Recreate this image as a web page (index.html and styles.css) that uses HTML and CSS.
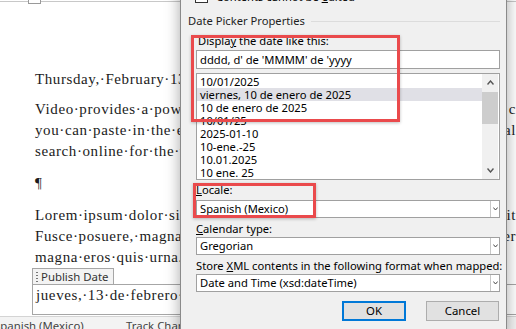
FILE: index.html
```html
<!DOCTYPE html>
<html lang="en">
<head>
    <meta charset="UTF-8">
    <title>Date Picker Properties</title>
    <link rel="stylesheet" href="styles.css">
</head>
<body>
    <div class="screen">
        <div class="doc">
            <div class="doc-top"><span class="doc-top-box"></span></div>
            <div class="page">
                <p class="para date-para"><span class="ln"><span>Thursday,·February·13,·2025</span></span></p>
                <p class="para">
                    <span class="ln"><span>Video·provides·a·powerful·way·to·help·you</span><span>·c</span></span>
                    <span class="ln"><span>you·can·paste·in·the·embed·code·for·the</span><span>al</span></span>
                    <span class="ln"><span>search·online·for·the·video·that·best</span></span>
                </p>
                <p class="para"><span class="ln"><span>¶</span></span></p>
                <p class="para">
                    <span class="ln"><span>Lorem·ipsum·dolor·sit·amet,·consectetuer</span><span>it</span></span>
                    <span class="ln"><span>Fusce·posuere,·magna·sed·pulvinar·ultricies</span><span>er</span></span>
                    <span class="ln"><span>magna·eros·quis·urna.·Nunc·viverra·imperdiet</span></span>
                </p>
                <div class="cc">
                    <div class="cc-tab"><span class="grip"></span>Publish Date</div>
                    <span class="ln"><span>jueves,·13·de·febrero·de·2025</span></span>
                </div>
            </div>
        </div>
        <div class="statusbar">
            <span class="status-lang">Spanish (Mexico)</span>
            <span class="status-track">Track Changes: Off</span>
        </div>

        <div class="dialog">
            <div class="check-row">
                <span class="checkbox"></span>
                <span>Contents cannot be <u>e</u>dited</span>
            </div>
            <div class="group-head">
                <span>Date Picker Properties</span>
                <span class="group-line"></span>
            </div>

            <div class="label label-display">Displa<u>y</u> the date like this:</div>
            <div class="textbox">dddd, d' de 'MMMM' de 'yyyy</div>
            <div class="listbox">
                <div class="list-items">
                    <div class="item">10/01/2025</div>
                    <div class="item selected">viernes, 10 de enero de 2025</div>
                    <div class="item">10 de enero de 2025</div>
                    <div class="item">10/01/25</div>
                    <div class="item">2025-01-10</div>
                    <div class="item">10-ene.-25</div>
                    <div class="item">10.01.2025</div>
                    <div class="item">10 ene. 25</div>
                </div>
                <div class="scrollbar">
                    <div class="sb-arrow">
                        <svg width="7" height="5" viewBox="0 0 7 5"><polyline points="0.5,4.5 3.5,1 6.5,4.5" fill="none" stroke="#555" stroke-width="1.4"/></svg>
                    </div>
                    <div class="sb-thumb"></div>
                    <div class="sb-arrow sb-down">
                        <svg width="7" height="5" viewBox="0 0 7 5"><polyline points="0.5,0.5 3.5,4 6.5,0.5" fill="none" stroke="#555" stroke-width="1.4"/></svg>
                    </div>
                </div>
            </div>

            <div class="label label-locale"><u>L</u>ocale:</div>
            <div class="combo">
                <span class="combo-text">Spanish (Mexico)</span>
                <span class="combo-btn"><svg width="5" height="4" viewBox="0 0 5 4"><polyline points="0.3,0.5 2.5,3 4.7,0.5" fill="none" stroke="#444" stroke-width="1"/></svg></span>
            </div>

            <div class="label label-cal"><u>C</u>alendar type:</div>
            <div class="combo combo-cal">
                <span class="combo-text">Gregorian</span>
                <span class="combo-btn"><svg width="5" height="4" viewBox="0 0 5 4"><polyline points="0.3,0.5 2.5,3 4.7,0.5" fill="none" stroke="#444" stroke-width="1"/></svg></span>
            </div>

            <div class="label label-xml">Store <u>X</u>ML contents in the following format when mapped:</div>
            <div class="combo combo-xml">
                <span class="combo-text">Date and Time (xsd:dateTime)</span>
                <span class="combo-btn"><svg width="5" height="4" viewBox="0 0 5 4"><polyline points="0.3,0.5 2.5,3 4.7,0.5" fill="none" stroke="#444" stroke-width="1"/></svg></span>
            </div>

            <div class="buttons">
                <button class="btn btn-ok">OK</button>
                <button class="btn btn-cancel">Cancel</button>
            </div>

            <div class="mark mark-format"></div>
            <div class="mark mark-locale"></div>
        </div>
    </div>
</body>
</html>
```

FILE: styles.css
```css
body {
    margin: 0;
    background-color: #fff;
}
.screen {
    position: relative;
    width: 516px;
    height: 329px;
    overflow: hidden;
    display: flex;
    flex-direction: column;
}
.doc {
    flex: 1;
    background-color: #fff;
    overflow: hidden;
}
.doc-top {
    height: 1px;
    border-bottom: 1px solid #c8c8c8;
    position: relative;
}
.doc-top-box {
    position: absolute;
    left: 28px;
    top: -8px;
    width: 11px;
    height: 10px;
    border: 1px solid #9a9a9a;
    background-color: #fff;
}
.page {
    padding-left: 35px;
    padding-top: 67px;
    font-family: "Liberation Serif", serif;
    font-size: 15px;
    letter-spacing: 0.6px;
    line-height: 21px;
    color: #1b1b1b;
}
.para {
    margin: 0 0 11px 0;
}
.date-para {
    margin-bottom: 9px;
}
.ln {
    display: flex;
    justify-content: space-between;
    white-space: nowrap;
}
.cc {
    position: relative;
    margin-top: 16px;
    margin-left: -3px;
    padding: 0 0 8px 3px;
    border: 1px solid #a6a6a6;
    border-right: none;
}
.cc-tab {
    position: absolute;
    left: -1px;
    top: -17px;
    height: 15px;
    padding: 0 4px 0 3px;
    border: 1px solid #a6a6a6;
    border-bottom: none;
    background-color: #f3f3f3;
    font-family: "Noto Sans", sans-serif;
    font-size: 11.4px;
    letter-spacing: 0;
    line-height: 15px;
    color: #333;
    display: flex;
    align-items: center;
    gap: 3px;
}
.grip {
    width: 2px;
    height: 11px;
    background-image: radial-gradient(circle, #777 0.8px, transparent 1px);
    background-size: 2px 3px;
}
.statusbar {
    height: 11px;
    border-top: 1px solid #d4d4d4;
    background-color: #f3f3f3;
    font-family: "Noto Sans", sans-serif;
    font-size: 11.4px;
    line-height: 16px;
    color: #444;
    white-space: nowrap;
    overflow: hidden;
    padding-top: 1px;
    display: flex;
}
.status-lang {
    margin-left: -6px;
    width: 132px;
}

/* dialog */
.dialog {
    position: absolute;
    left: 180px;
    top: -21px;
    width: 327px;
    height: 360px;
    box-sizing: border-box;
    padding: 0 6px 0 15px;
    background-color: #f0f0f0;
    border: 1px solid #8a8a8a;
    box-shadow: 0 0 14px rgba(0, 0, 0, 0.35);
    font-family: "Noto Sans", sans-serif;
    font-size: 11.2px;
    color: #000;
}
.check-row {
    display: flex;
    align-items: flex-end;
    gap: 8px;
    margin-top: 10px;
    margin-left: -1px;
    height: 13px;
    line-height: 12px;
}
.checkbox {
    width: 11px;
    height: 11px;
    border: 1px solid #333;
    background-color: #fff;
    flex: none;
}
.group-head {
    display: flex;
    align-items: center;
    margin: 12px 0 0 -8px;
    height: 12px;
    line-height: 12px;
    gap: 6px;
    color: #1e1e1e;
}
.group-line {
    flex: 1;
    height: 1px;
    background-color: #dcdcdc;
}
.label {
    height: 12px;
    line-height: 12px;
    white-space: nowrap;
}
.label-display {
    margin-top: 8px;
    margin-left: 2px;
}
.textbox {
    margin-top: 3px;
    height: 19px;
    box-sizing: border-box;
    border: 1px solid #a0a0a0;
    background-color: #fff;
    padding-left: 3px;
    line-height: 17px;
}
.listbox {
    margin-top: 4px;
    height: 107px;
    box-sizing: border-box;
    border: 1px solid #a0a0a0;
    background-color: #fff;
    display: flex;
}
.list-items {
    flex: 1;
    padding-top: 1px;
}
.item {
    height: 13px;
    line-height: 13px;
    padding-left: 3px;
    white-space: nowrap;
}
.item.selected {
    background-color: #e0e0e6;
}
.scrollbar {
    width: 16px;
    margin: 0 1px 0 0;
    background-color: #f0f0f0;
    display: flex;
    flex-direction: column;
}
.sb-arrow {
    height: 17px;
    display: flex;
    align-items: center;
    justify-content: center;
}
.sb-thumb {
    margin-top: 1px;
    height: 32px;
    background-color: #cdcdcd;
}
.sb-down {
    margin-top: auto;
}
.label-locale {
    margin-top: 4px;
}
.combo {
    margin-top: 4px;
    height: 18px;
    box-sizing: border-box;
    border: 1px solid #a0a0a0;
    background-color: #fff;
    display: flex;
    line-height: 16px;
}
.combo-text {
    flex: 1;
    padding-left: 3px;
}
.combo-btn {
    width: 8px;
    border-left: 1px solid #c8c8c8;
    display: flex;
    align-items: center;
    justify-content: center;
}
.label-cal {
    margin-top: 5px;
}
.combo-cal {
    margin-top: 2px;
}
.label-xml {
    margin-top: 5px;
}
.combo-xml {
    margin-top: 2px;
}
.buttons {
    margin-top: 9px;
    display: flex;
    justify-content: flex-end;
    gap: 20px;
    padding-right: 1px;
}
.btn {
    height: 20px;
    box-sizing: border-box;
    background-color: #e1e1e1;
    border: 1px solid #adadad;
    font-family: "Noto Sans", sans-serif;
    font-size: 11.4px;
    color: #000;
    padding: 0;
    line-height: 16px;
}
.btn-ok {
    width: 64px;
    border: 2px solid #0078d7;
}
.btn-cancel {
    width: 73px;
}
.mark {
    position: absolute;
    box-sizing: border-box;
    border: 3px solid #ea4a4c;
    box-shadow: 0 1px 3px rgba(0, 0, 0, 0.25);
}
.mark-format {
    left: 10px;
    top: 55px;
    width: 209px;
    height: 87px;
}
.mark-locale {
    left: 12px;
    top: 203px;
    width: 123px;
    height: 35px;
}
```
